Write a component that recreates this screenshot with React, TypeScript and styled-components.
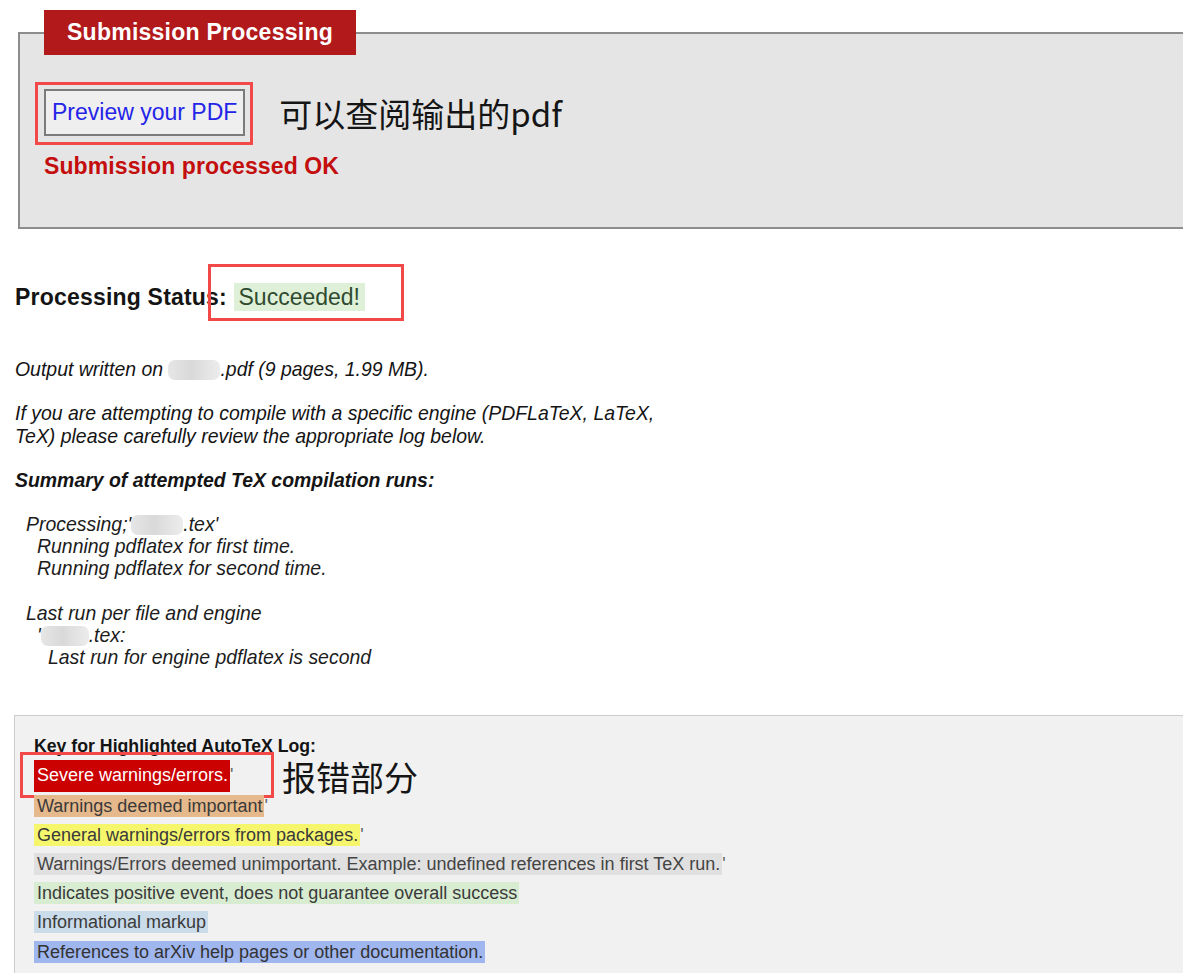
import styled, { createGlobalStyle } from "styled-components";

const GlobalStyle = createGlobalStyle`
  html, body {
    margin: 0;
    padding: 0;
    background: #ffffff;
  }
  body {
    font-family: "Liberation Sans", Arial, sans-serif;
    color: #141414;
    overflow: hidden;
  }
`;

const Page = styled.div`
  width: 1183px;
  height: 973px;
  overflow: hidden;
  padding-top: 10px;
  box-sizing: border-box;
`;

const Panel = styled.fieldset`
  margin: 0 -40px 0 18px;
  padding: 34px 24px 47px 24px;
  border: 2px solid #8d8d8d;
  background: #e5e5e5;
  min-width: 0;
`;

const Legend = styled.legend`
  margin: 0;
  padding: 0 23px;
  background: #b2191b;
  color: #ffffff;
  font-size: 23px;
  font-weight: bold;
  letter-spacing: 0.25px;
  line-height: 45px;
`;

const PreviewRow = styled.div`
  display: flex;
  align-items: center;
  gap: 34px;
`;

const Annotated = styled.span`
  position: relative;
  display: inline-flex;
  align-items: center;
`;

const Callout = styled.span<{ $t: number; $r: number; $b: number; $l: number }>`
  position: absolute;
  top: ${(p) => p.$t}px;
  right: ${(p) => p.$r}px;
  bottom: ${(p) => p.$b}px;
  left: ${(p) => p.$l}px;
  border: 3px solid #f24848;
  pointer-events: none;
`;

const PreviewButton = styled.button`
  height: 47px;
  padding: 0 6px;
  font-family: inherit;
  font-size: 23px;
  color: #2424e8;
  background: #efefef;
  border: 2px solid #7b7b7b;
  cursor: pointer;
`;

const Remark = styled.span`
  font-family: "Noto Sans CJK SC", "Noto Sans", sans-serif;
  font-size: 33px;
  color: #151515;
  line-height: 40px;
`;

const StatusOk = styled.div`
  margin-top: 17px;
  color: #c40d0d;
  font-size: 23px;
  font-weight: bold;
  letter-spacing: 0.1px;
`;

const Content = styled.div`
  padding-left: 15px;
`;

const StatusHeading = styled.h2`
  margin: 54px 0 0;
  font-size: 23px;
  line-height: 28px;
  font-weight: bold;
  letter-spacing: 0.2px;
`;

const SuccessBadge = styled.span`
  position: relative;
  padding: 1px 5px;
  background: #dff0d8;
  color: #2f4a2f;
  font-weight: normal;
  letter-spacing: 0;
`;

const Notes = styled.div`
  margin-top: 47px;
  display: flex;
  flex-direction: column;
  gap: 21px;
  max-width: 670px;
`;

const Note = styled.p<{ $strong?: boolean }>`
  margin: 0;
  font-style: italic;
  font-size: 19.45px;
  line-height: 23px;
  font-weight: ${(p) => (p.$strong ? "bold" : "normal")};
`;

const LogBlock = styled.div`
  font-style: italic;
  font-size: 19.45px;
  line-height: 22.2px;
  color: #1c1c1c;
`;

const LogLine = styled.div<{ $indent: number }>`
  padding-left: ${(p) => 11 + p.$indent * 11}px;
  min-height: 22.2px;
  white-space: nowrap;
`;

const Smudge = styled.span<{ $w: number }>`
  display: inline-block;
  width: ${(p) => p.$w}px;
  height: 20px;
  vertical-align: -4px;
  border-radius: 7px;
  background: linear-gradient(90deg, #e6e6e6 0%, #d9d9d9 45%, #e2e2e2 70%, #ececec 100%);
`;

const KeyPanel = styled.section`
  margin: 47px -40px 0 14px;
  padding: 17px 0 60px 19px;
  background: #f1f1f1;
  border: 1px solid #cdcdcd;
`;

const KeyHeading = styled.div`
  font-size: 17.7px;
  font-weight: bold;
  line-height: 27px;
`;

const KeyRow = styled.div`
  position: relative;
  font-size: 18px;
  line-height: 29.2px;
  white-space: nowrap;
`;

const tones = {
  severe: { bg: "#cb0000", fg: "#ffffff" },
  important: { bg: "#e6b98c", fg: "#3a3a3a" },
  general: { bg: "#f6f66c", fg: "#3a3a3a" },
  minor: { bg: "#e0e0e0", fg: "#444444" },
  positive: { bg: "#d8ecd1", fg: "#3a3a3a" },
  info: { bg: "#cadbe9", fg: "#3a3a3a" },
  docs: { bg: "#9fb6ef", fg: "#333333" },
};

type Tone = keyof typeof tones;

const KeyMark = styled.span<{ $tone: Tone }>`
  padding: 1px 2px 1px 3px;
  background: ${(p) => tones[p.$tone].bg};
  color: ${(p) => tones[p.$tone].fg};
`;

const Tick = styled.span`
  color: #666666;
`;

const RowRemark = styled.span`
  position: absolute;
  left: 248px;
  top: -3px;
  font-family: "Noto Sans CJK SC", "Noto Sans", sans-serif;
  font-size: 34px;
  line-height: 40px;
  color: #151515;
`;

const keys: { tone: Tone; text: string; tick: boolean }[] = [
  { tone: "important", text: "Warnings deemed important", tick: true },
  { tone: "general", text: "General warnings/errors from packages.", tick: true },
  {
    tone: "minor",
    text: "Warnings/Errors deemed unimportant. Example: undefined references in first TeX run.",
    tick: true,
  },
  { tone: "positive", text: "Indicates positive event, does not guarantee overall success", tick: false },
  { tone: "info", text: "Informational markup", tick: false },
  { tone: "docs", text: "References to arXiv help pages or other documentation.", tick: false },
];

export default function App() {
  return (
    <Page>
      <GlobalStyle />
      <Panel>
        <Legend>Submission Processing</Legend>
        <PreviewRow>
          <Annotated>
            <PreviewButton>Preview your PDF</PreviewButton>
            <Callout $t={-7} $r={-8} $b={-9} $l={-9} />
          </Annotated>
          <Remark>可以查阅输出的pdf</Remark>
        </PreviewRow>
        <StatusOk>Submission processed OK</StatusOk>
      </Panel>

      <Content>
        <StatusHeading>
          Processing Status:{" "}
          <SuccessBadge>
            Succeeded!
            <Callout $t={-19} $r={-39} $b={-10} $l={-26} />
          </SuccessBadge>
        </StatusHeading>

        <Notes>
          <Note>
            Output written on <Smudge $w={52} />.pdf (9 pages, 1.99 MB).
          </Note>
          <Note>
            If you are attempting to compile with a specific engine (PDFLaTeX, LaTeX, TeX) please
            carefully review the appropriate log below.
          </Note>
          <Note $strong>Summary of attempted TeX compilation runs:</Note>
          <LogBlock>
            <LogLine $indent={0}>
              Processing;'<Smudge $w={52} />.tex'
            </LogLine>
            <LogLine $indent={1}>Running pdflatex for first time.</LogLine>
            <LogLine $indent={1}>Running pdflatex for second time.</LogLine>
            <LogLine $indent={0} />
            <LogLine $indent={0}>Last run per file and engine</LogLine>
            <LogLine $indent={1}>
              '<Smudge $w={48} />.tex:
            </LogLine>
            <LogLine $indent={2}>Last run for engine pdflatex is second</LogLine>
          </LogBlock>
        </Notes>
      </Content>

      <KeyPanel>
        <KeyHeading>Key for Highlighted AutoTeX Log:</KeyHeading>
        <KeyRow>
          <Annotated>
            <KeyMark $tone="severe">Severe warnings/errors.</KeyMark>
            <Tick>'</Tick>
            <Callout $t={-8} $r={-40} $b={-6} $l={-14} />
          </Annotated>
          <RowRemark>报错部分</RowRemark>
        </KeyRow>
        {keys.map((k) => (
          <KeyRow key={k.text}>
            <KeyMark $tone={k.tone}>{k.text}</KeyMark>
            {k.tick && <Tick>'</Tick>}
          </KeyRow>
        ))}
      </KeyPanel>
    </Page>
  );
}
